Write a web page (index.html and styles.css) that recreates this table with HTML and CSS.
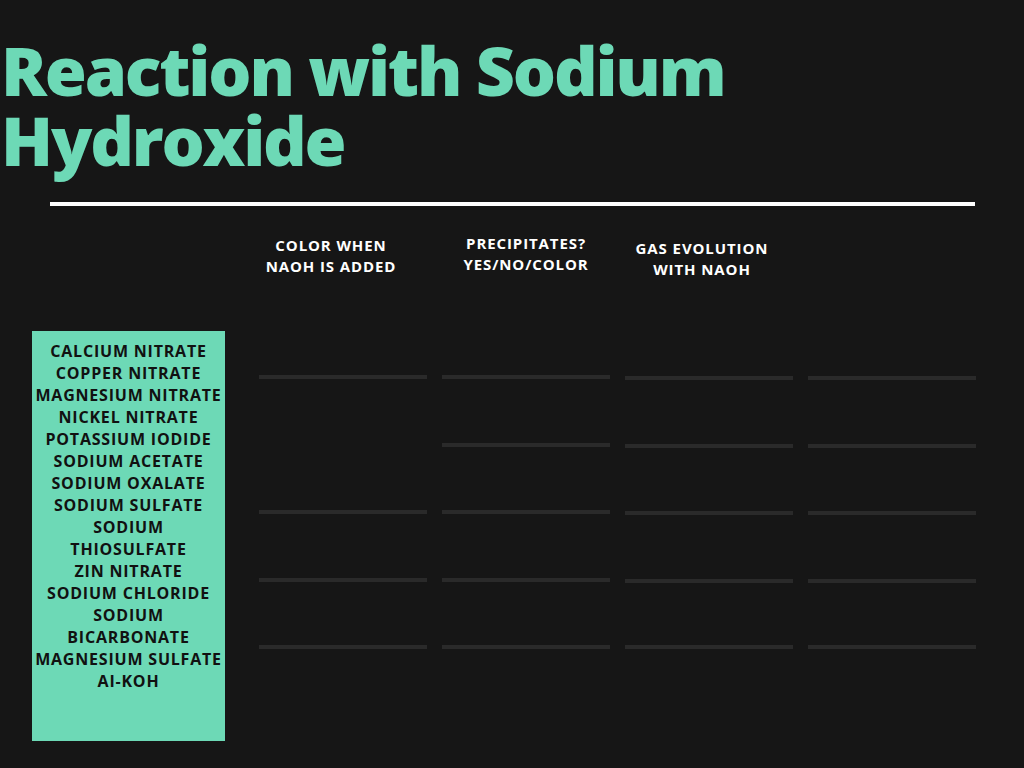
FILE: index.html
```html
<!DOCTYPE html>
<html lang="en">
<head>
<meta charset="utf-8">
<title>Reaction with Sodium Hydroxide</title>
<link rel="stylesheet" href="styles.css">
</head>
<body>
<h1 class="title">Reaction with Sodium<br>Hydroxide</h1>
<div class="rule"></div>
<main class="content">
  <div class="compounds">
    CALCIUM NITRATE<br>
    COPPER NITRATE<br>
    MAGNESIUM NITRATE<br>
    NICKEL NITRATE<br>
    POTASSIUM IODIDE<br>
    SODIUM ACETATE<br>
    SODIUM OXALATE<br>
    SODIUM SULFATE<br>
    SODIUM<br>
    THIOSULFATE<br>
    ZIN NITRATE<br>
    SODIUM CHLORIDE<br>
    SODIUM<br>
    BICARBONATE<br>
    MAGNESIUM SULFATE<br>
    AI-KOH
  </div>
  <div class="table">
    <div class="heads">
      <div class="head head-1">COLOR WHEN<br>NAOH IS ADDED</div>
      <div class="head head-2">PRECIPITATES?<br>YES/NO/COLOR</div>
      <div class="head head-3">GAS EVOLUTION<br>WITH NAOH</div>
    </div>
    <div class="grid">
      <div class="line"></div><div class="line"></div><div class="line low"></div><div class="line low"></div>
      <div class="line hidden"></div><div class="line"></div><div class="line low"></div><div class="line low"></div>
      <div class="line"></div><div class="line"></div><div class="line low"></div><div class="line low"></div>
      <div class="line"></div><div class="line"></div><div class="line low"></div><div class="line low"></div>
      <div class="line"></div><div class="line"></div><div class="line"></div><div class="line"></div>
    </div>
  </div>
</main>
</body>
</html>
```
FILE: styles.css
```css
html, body {
  margin: 0;
  padding: 0;
}
body {
  width: 1024px;
  height: 768px;
  background: #161616;
  font-family: "Open Sans", "DejaVu Sans", sans-serif;
  overflow: hidden;
}
.title {
  margin: 35px 0 0 1px;
  font-size: 68px;
  line-height: 70px;
  font-weight: 800;
  color: #6dd9b6;
  letter-spacing: -2.2px;
  white-space: nowrap;
}
.rule {
  margin: 27px 0 0 50px;
  width: 925px;
  height: 4px;
  background: #ffffff;
}
.content {
  display: flex;
  align-items: flex-start;
  gap: 34px;
  padding-left: 32px;
  margin-top: 29px;
}
.compounds {
  margin-top: 96px;
  width: 193px;
  height: 401px;
  padding-top: 9px;
  background: #6dd9b6;
  color: #111111;
  font-size: 16px;
  line-height: 22px;
  font-weight: 700;
  letter-spacing: 0.8px;
  text-align: center;
  white-space: nowrap;
}
.table {
  width: 717px;
}
.heads {
  display: flex;
  height: 60px;
}
.head {
  color: #ffffff;
  font-size: 15px;
  line-height: 21px;
  font-weight: 700;
  letter-spacing: 0.9px;
  text-align: center;
  white-space: nowrap;
}
.head-1 {
  width: 144px;
}
.head-2 {
  margin-left: 38px;
  width: 170px;
  margin-top: -2px;
}
.head-3 {
  margin-left: 14px;
  width: 154px;
  margin-top: 3px;
}
.grid {
  display: grid;
  grid-template-columns: repeat(4, 168px);
  column-gap: 15px;
  row-gap: 63.5px;
  padding-top: 80px;
}
.line {
  height: 4px;
  background: #2a2a2a;
}
.line.low {
  transform: translateY(1px);
}
.line.hidden {
  visibility: hidden;
}
```
